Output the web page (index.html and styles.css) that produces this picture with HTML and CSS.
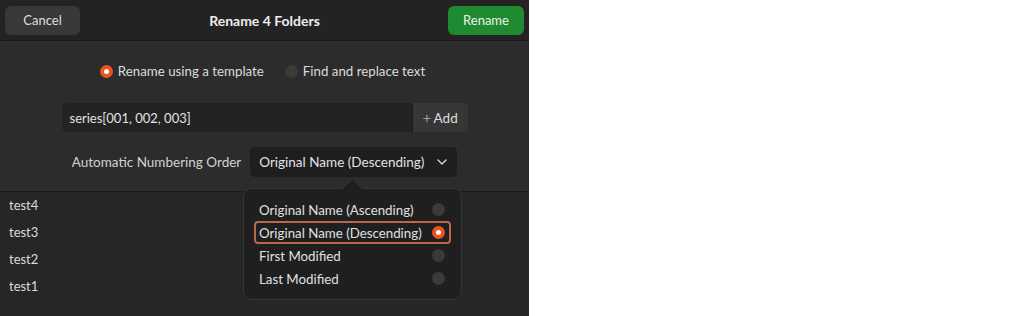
FILE: index.html
```html
<!DOCTYPE html>
<html>
<head>
<meta charset="utf-8">
<link rel="stylesheet" href="styles.css">
</head>
<body>
<div class="dialog">
  <header class="header">
    <button class="btn btn-cancel">Cancel</button>
    <div class="title">Rename 4 Folders</div>
    <button class="btn btn-rename">Rename</button>
  </header>
  <section class="controls">
    <div class="mode-row">
      <label class="radio-opt"><span class="radio checked"></span>Rename using a template</label>
      <label class="radio-opt"><span class="radio"></span>Find and replace text</label>
    </div>
    <div class="entry-row">
      <div class="entry">series[001, 002, 003]</div>
      <button class="add-btn"><span class="plus">+</span>Add</button>
    </div>
    <div class="order-row">
      <span class="order-label">Automatic Numbering Order</span>
      <div class="dropdown">
        <span>Original Name (Descending)</span>
        <svg class="chev" width="10" height="6" viewBox="0 0 10 6"><path d="M1 1l4 4 4-4" fill="none" stroke="#d8d8d8" stroke-width="1.4" stroke-linecap="round" stroke-linejoin="round"/></svg>
      </div>
    </div>
  </section>
  <section class="list">
    <div class="row">test4</div>
    <div class="row">test3</div>
    <div class="row">test2</div>
    <div class="row">test1</div>
  </section>
  <div class="popover">
    <div class="arrow"></div>
    <div class="pop-item"><span>Original Name (Ascending)</span><span class="radio"></span></div>
    <div class="pop-item selected"><span>Original Name (Descending)</span><span class="radio checked"></span></div>
    <div class="pop-item"><span>First Modified</span><span class="radio"></span></div>
    <div class="pop-item"><span>Last Modified</span><span class="radio"></span></div>
  </div>
</div>
</body>
</html>
```

FILE: styles.css
```css
html, body {
  margin: 0;
  padding: 0;
  background: #ffffff;
}
body {
  font-family: Lato, "Noto Sans", "DejaVu Sans", sans-serif;
  font-size: 13px;
  color: #dcdcdc;
}
.dialog {
  position: relative;
  width: 529px;
  height: 316px;
  background: #2c2c2c;
  display: flex;
  flex-direction: column;
  overflow: hidden;
}
.header {
  height: 41px;
  box-sizing: border-box;
  background: #232323;
  border-bottom: 1px solid #171717;
  display: flex;
  align-items: center;
  justify-content: space-between;
  padding: 0 5px 0 5px;
}
.btn {
  font-family: inherit;
  font-size: 13px;
  height: 29px;
  border: none;
  border-radius: 6px;
  color: #dedede;
  padding: 0;
}
.btn-cancel {
  width: 75px;
  background: #383838;
}
.btn-rename {
  width: 76px;
  background: #1f8a2f;
  color: #e8f3e8;
}
.title {
  font-weight: bold;
  font-size: 14px;
  color: #eeeeee;
  margin-left: 1px;
}
.controls {
  display: flex;
  flex-direction: column;
  align-items: center;
  height: 150px;
  box-sizing: border-box;
  padding-top: 21px;
}
.mode-row {
  display: flex;
  gap: 21px;
  height: 18px;
  align-items: center;
  margin-left: -4px;
  font-size: 13.3px;
}
.radio-opt {
  display: flex;
  align-items: center;
  gap: 5px;
}
.radio {
  width: 13px;
  height: 13px;
  border-radius: 50%;
  background: #3a3a3a;
  box-sizing: border-box;
  flex: none;
}
.radio.checked {
  background: #e95420;
  position: relative;
}
.radio.checked::after {
  content: "";
  position: absolute;
  left: 4px;
  top: 4px;
  width: 5px;
  height: 5px;
  border-radius: 50%;
  background: #ffffff;
}
.entry-row {
  display: flex;
  margin-top: 23px;
  height: 29px;
  width: 406px;
}
.entry {
  flex: 1;
  background: #232323;
  border-radius: 5px 0 0 5px;
  border-right: 1px solid #1b1b1b;
  display: flex;
  align-items: center;
  padding-left: 8px;
  color: #e2e2e2;
}
.add-btn {
  width: 55px;
  background: #363636;
  border: none;
  border-radius: 0 5px 5px 0;
  color: #dcdcdc;
  font-family: inherit;
  font-size: 13.5px;
  padding: 0;
  display: flex;
  align-items: center;
  justify-content: center;
  gap: 2px;
}
.plus {
  font-size: 16px;
  font-weight: 300;
  line-height: 1;
}
.order-row {
  display: flex;
  align-items: center;
  gap: 9px;
  margin-top: 15px;
  font-size: 13.5px;
}
.order-label {
  color: #d2d2d2;
}
.dropdown {
  width: 207px;
  height: 30px;
  box-sizing: border-box;
  background: #1e1e1e;
  border-radius: 5px;
  display: flex;
  align-items: center;
  justify-content: space-between;
  padding: 0 10px 0 9px;
  color: #e2e2e2;
}
.list {
  flex: 1;
  background: #262626;
  border-top: 1px solid #1a1a1a;
}
.row {
  height: 27px;
  line-height: 27px;
  padding-left: 9px;
  color: #dadada;
}
.popover {
  position: absolute;
  left: 243px;
  top: 188px;
  width: 219px;
  height: 112px;
  box-sizing: border-box;
  background: #1f1f1f;
  border: 1px solid #353535;
  border-radius: 9px;
  padding: 9px 10px 0 10px;
}
.arrow {
  position: absolute;
  left: 101px;
  top: -8px;
  width: 14px;
  height: 14px;
  background: #1f1f1f;
  border-left: 1px solid #353535;
  border-top: 1px solid #353535;
  transform: rotate(45deg);
}
.pop-item {
  height: 23px;
  box-sizing: border-box;
  display: flex;
  align-items: center;
  justify-content: space-between;
  padding: 0 5px 0 4px;
  color: #e0e0e0;
  border: 1px solid transparent;
  border-radius: 4px;
  font-size: 13.3px;
}
.pop-item.selected {
  border: 2px solid #b9684a;
  padding: 0 4px 0 3px;
}
```
